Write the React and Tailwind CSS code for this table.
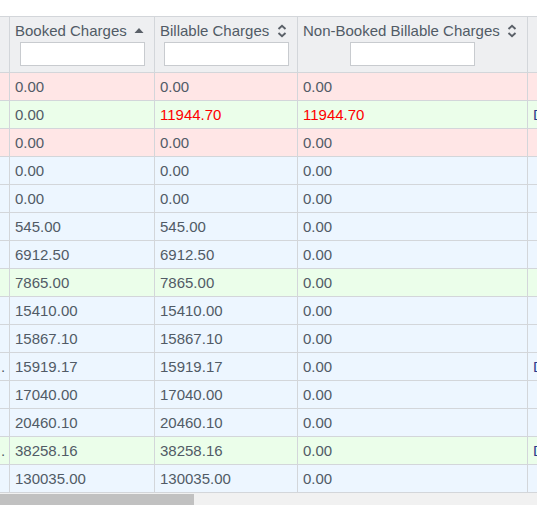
import React from "react";

const rows = [
  { bg: "bg-[#ffe6e6]", a: "0.00", b: "0.00", c: "0.00" },
  { bg: "bg-[#ebfeea]", a: "0.00", b: "11944.70", c: "11944.70", red: true, d: true },
  { bg: "bg-[#ffe6e6]", a: "0.00", b: "0.00", c: "0.00" },
  { bg: "bg-[#edf6ff]", a: "0.00", b: "0.00", c: "0.00" },
  { bg: "bg-[#edf6ff]", a: "0.00", b: "0.00", c: "0.00" },
  { bg: "bg-[#edf6ff]", a: "545.00", b: "545.00", c: "0.00" },
  { bg: "bg-[#edf6ff]", a: "6912.50", b: "6912.50", c: "0.00" },
  { bg: "bg-[#ebfeea]", a: "7865.00", b: "7865.00", c: "0.00" },
  { bg: "bg-[#edf6ff]", a: "15410.00", b: "15410.00", c: "0.00" },
  { bg: "bg-[#edf6ff]", a: "15867.10", b: "15867.10", c: "0.00" },
  { bg: "bg-[#edf6ff]", a: "15919.17", b: "15919.17", c: "0.00", dot: true, d: true },
  { bg: "bg-[#edf6ff]", a: "17040.00", b: "17040.00", c: "0.00" },
  { bg: "bg-[#edf6ff]", a: "20460.10", b: "20460.10", c: "0.00" },
  { bg: "bg-[#ebfeea]", a: "38258.16", b: "38258.16", c: "0.00", dot: true, d: true },
  { bg: "bg-[#edf6ff]", a: "130035.00", b: "130035.00", c: "0.00" },
];

const cols = "grid grid-cols-[10px_145px_143px_230px_1fr]";
const cell = "border-r border-b border-[#d3d6da] h-[28px] flex items-center pl-[5px] pt-[2px] overflow-hidden whitespace-nowrap";

function SortBoth() {
  return (
    <svg width="10" height="14" viewBox="0 0 10 14" className="shrink-0">
      <path d="M1.5 5 L5 1.8 L8.5 5" fill="none" stroke="#5a6068" strokeWidth="1.9" />
      <path d="M1.5 9 L5 12.2 L8.5 9" fill="none" stroke="#5a6068" strokeWidth="1.9" />
    </svg>
  );
}

function SortAsc() {
  return (
    <svg width="10" height="14" viewBox="0 0 10 14" className="shrink-0">
      <path d="M0.5 9 L5 4 L9.5 9 Z" fill="#5a6068" />
    </svg>
  );
}

function HeadCell({ title, icon }) {
  return (
    <div className="border-r border-b border-[#d3d6da] h-[56px] bg-[#eeeff1] px-[5px] pt-[4px] flex flex-col">
      <div className="h-[20px] flex items-center justify-between pr-[5px]">
        <span className="whitespace-nowrap">{title}</span>
        {icon}
      </div>
      <div className="flex justify-center mt-[1px]">
        <div className="w-[125px] h-[24px] bg-white border border-[#c8cbcf]" />
      </div>
    </div>
  );
}

export default function App() {
  return (
    <div
      className="w-[537px] h-[505px] bg-white overflow-hidden text-[15px] text-[#515b66] flex flex-col"
      style={{ fontFamily: '"Liberation Sans", Arial, sans-serif' }}
    >
      <div className="h-[16px] shrink-0" />
      <div className="border-t border-[#d3d6da]">
        <div className={cols}>
          <div className="border-r border-b border-[#d3d6da] h-[56px] bg-[#eeeff1]" />
          <HeadCell title="Booked Charges" icon={<SortAsc />} />
          <HeadCell title="Billable Charges" icon={<SortBoth />} />
          <HeadCell title="Non-Booked Billable Charges" icon={<SortBoth />} />
          <div className="border-b border-[#d3d6da] h-[56px] bg-[#eeeff1]" />
        </div>
        {rows.map((r, i) => (
          <div key={i} className={cols + " " + r.bg}>
            <div className="border-r border-b border-[#d3d6da] h-[28px] flex items-center pt-[2px] overflow-hidden">
              {r.dot ? <span className="pl-[1px]">.</span> : null}
            </div>
            <div className={cell}>{r.a}</div>
            <div className={cell + (r.red ? " text-[#ff0000]" : "")}>{r.b}</div>
            <div className={cell + (r.red ? " text-[#ff0000]" : "")}>{r.c}</div>
            <div className="border-b border-[#d3d6da] h-[28px] flex items-center pl-[5px] pt-[2px] overflow-hidden">
              {r.d ? <span className="text-[#2a3a8c]">D</span> : null}
            </div>
          </div>
        ))}
      </div>
      <div className="flex-1 bg-[#f1f1f1] flex items-stretch pt-[1px]">
        <div className="w-[194px] bg-[#c1c1c1]" />
      </div>
    </div>
  );
}
